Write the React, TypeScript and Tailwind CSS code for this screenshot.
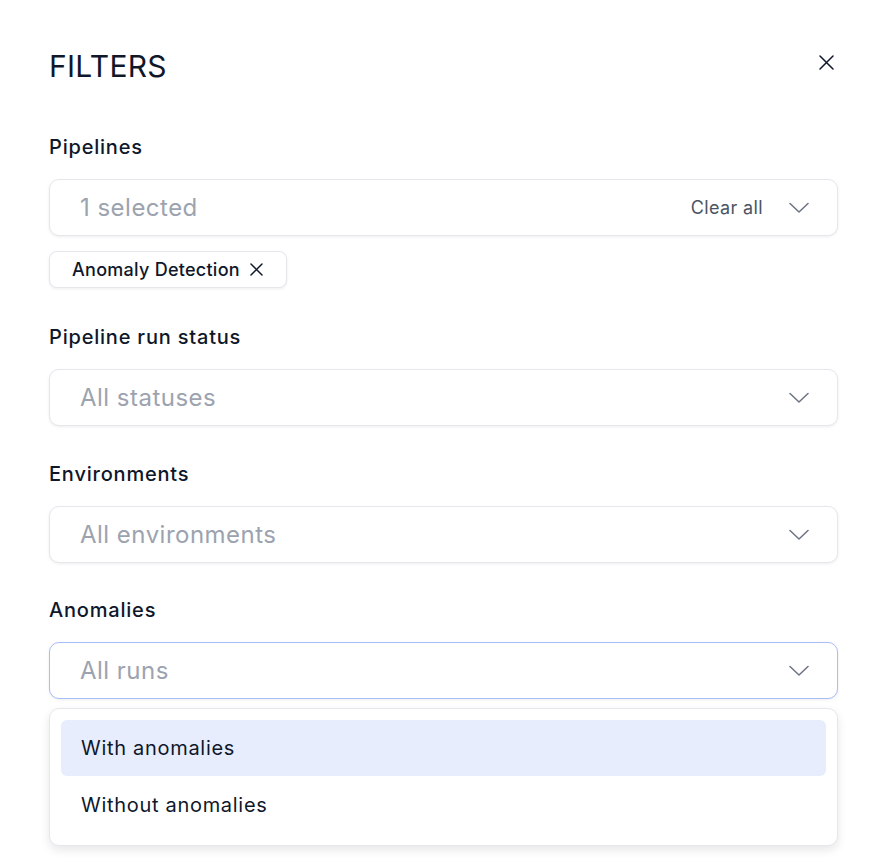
const font = { fontFamily: 'Inter, "Noto Sans", sans-serif' }

function Chevron() {
  return (
    <svg width="20" height="12" viewBox="0 0 20 12" fill="none" className="text-[#6b7280]">
      <path d="M1 1.5 L10 10 L19 1.5" stroke="currentColor" strokeWidth="1.5" strokeLinecap="round" strokeLinejoin="round" />
    </svg>
  )
}

function Cross({ size, width = 1.5 }: { size: number; width?: number }) {
  return (
    <svg width={size} height={size} viewBox={`0 0 ${size} ${size}`} fill="none">
      <path d={`M1 1 L${size - 1} ${size - 1} M${size - 1} 1 L1 ${size - 1}`} stroke="currentColor" strokeWidth={width} strokeLinecap="round" />
    </svg>
  )
}

function SelectBox({ placeholder, active = false, clearable = false }: { placeholder: string; active?: boolean; clearable?: boolean }) {
  return (
    <div
      className={`flex h-[57px] items-center rounded-[10px] border bg-white pl-[30px] pr-[28px] shadow-[0_1px_3px_rgba(15,23,42,0.08)] ${
        active ? 'border-[#a9bdf8]' : 'border-[#e5e7eb]'
      }`}
    >
      <span className="flex-1 text-[24px] tracking-[0.02em] text-[#9ca3af]">{placeholder}</span>
      {clearable && <span className="mr-[26px] text-[18px] tracking-[0.02em] text-[#4b5563]">Clear all</span>}
      <Chevron />
    </div>
  )
}

function Label({ children }: { children: string }) {
  return <div className="mb-[18px] text-[20px] font-medium leading-[28px] tracking-[0.04em] text-[#0f172a]">{children}</div>
}

export default function App() {
  return (
    <div className="min-h-screen bg-white px-[48px] pt-[44px] pl-[49px]" style={font}>
      {/* Header */}
      <div className="flex items-start justify-between">
        <h1 className="text-[30px] font-normal leading-[44px] tracking-[0.01em] text-[#0f172a]">FILTERS</h1>
        <button className="mr-[4px] mt-[11px] text-[#0f172a]">
          <Cross size={15} />
        </button>
      </div>

      <div className="mt-[45px] flex flex-col">
        {/* Pipelines */}
        <Label>Pipelines</Label>
        <SelectBox placeholder="1 selected" clearable />
        <div className="mt-[15px] flex">
          <span className="flex h-[37px] items-center gap-[10px] rounded-[8px] border border-[#e5e7eb] bg-white pl-[22px] pr-[23px] text-[18px] font-medium tracking-[0.015em] text-[#0f172a] shadow-[0_1px_3px_rgba(15,23,42,0.08)]">
            Anomaly Detection
            <Cross size={13} />
          </span>
        </div>

        <div className="mt-[35px]">
          <Label>Pipeline run status</Label>
          <SelectBox placeholder="All statuses" />
        </div>

        <div className="mt-[34px]">
          <Label>Environments</Label>
          <SelectBox placeholder="All environments" />
        </div>

        <div className="mt-[33px]">
          <Label>Anomalies</Label>
          <SelectBox placeholder="All runs" active />
          {/* Open menu */}
          <div className="mt-[9px] rounded-[10px] border border-[#e5e7eb] bg-white p-[11px] shadow-[0_4px_10px_rgba(15,23,42,0.10)]">
            <div className="flex h-[56px] items-center rounded-[6px] bg-[#e7edfd] px-[20px] text-[20px] tracking-[0.035em] text-[#0f172a]">
              With anomalies
            </div>
            <div className="flex h-[58px] items-center px-[20px] text-[20px] tracking-[0.035em] text-[#0f172a]">Without anomalies</div>
          </div>
        </div>
      </div>
    </div>
  )
}
